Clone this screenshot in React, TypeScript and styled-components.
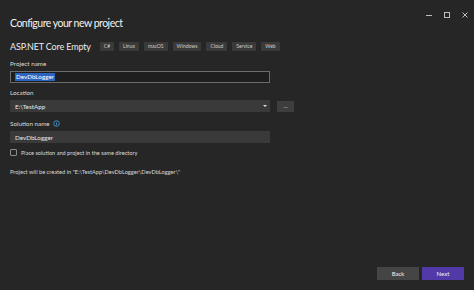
import React from 'react';
import styled, { createGlobalStyle } from 'styled-components';

const GlobalStyle = createGlobalStyle`
  html, body {
    margin: 0;
    padding: 0;
    background: #262626;
  }
  body {
    font-family: Lato, 'Open Sans', 'Liberation Sans', sans-serif;
    color: #e6e6e6;
  }
`;

const Window = styled.div`
  width: 474px;
  height: 290px;
  display: flex;
  flex-direction: column;
  background: #262626;
  box-sizing: border-box;
  overflow: hidden;
`;

const Header = styled.div`
  display: flex;
  justify-content: space-between;
  align-items: flex-start;
`;

const Title = styled.h1`
  margin: 15px 0 0 10px;
  font-size: 10.5px;
  line-height: 16px;
  font-weight: 400;
  letter-spacing: -0.5px;
  color: #f2f2f2;
`;

const Controls = styled.div`
  display: flex;
  align-items: center;
  gap: 12px;
  padding: 12px 6px 0 0;
`;

const ControlButton = styled.span`
  width: 6px;
  height: 6px;
  display: flex;
  align-items: center;
  justify-content: center;
`;

const Subtitle = styled.div`
  display: flex;
  align-items: center;
  gap: 5px;
  margin: 9px 0 0 10px;
  height: 12px;
`;

const Template = styled.span`
  font-size: 9px;
  letter-spacing: -0.15px;
  color: #ececec;
  margin-right: 4px;
`;

const Tag = styled.span`
  height: 9px;
  padding: 0 4px;
  display: flex;
  align-items: center;
  background: #3a3a3a;
  color: #cfcfcf;
  font-size: 5px;
  border-radius: 1px;
`;

const Form = styled.div`
  display: flex;
  flex-direction: column;
  padding: 0 10px;
  margin-top: 7px;
`;

const Label = styled.div<{ $top: number }>`
  display: flex;
  align-items: center;
  gap: 3px;
  height: 8px;
  margin-top: ${(p) => p.$top}px;
  margin-bottom: 4px;
  font-size: 6.3px;
  color: #dcdcdc;
`;

const FieldRow = styled.div`
  display: flex;
  align-items: center;
  gap: 7px;
`;

const Field = styled.div<{ $variant: 'focus' | 'filled' }>`
  width: 260px;
  height: 12px;
  box-sizing: border-box;
  display: flex;
  align-items: center;
  justify-content: space-between;
  padding: 0 4px;
  font-size: 6.3px;
  color: #e6e6e6;
  background: ${(p) => (p.$variant === 'focus' ? '#1e1e1e' : '#3a3a3a')};
  border: 1px solid ${(p) => (p.$variant === 'focus' ? '#6b6b6b' : '#3a3a3a')};
`;

const Selected = styled.span`
  background: #2b63c0;
  color: #ffffff;
  padding: 0 1px;
  line-height: 8px;
`;

const Arrow = styled.span`
  width: 0;
  height: 0;
  border-left: 2px solid transparent;
  border-right: 2px solid transparent;
  border-top: 2px solid #e0e0e0;
  margin-right: -2px;
`;

const BrowseButton = styled.div`
  width: 17px;
  height: 11px;
  display: flex;
  align-items: center;
  justify-content: center;
  background: #3e3e3e;
  color: #cfcfcf;
  font-size: 6px;
  line-height: 6px;
`;

const CheckRow = styled.label`
  display: flex;
  align-items: center;
  gap: 4px;
  margin-top: 5px;
  height: 8px;
  font-size: 5.6px;
  color: #dcdcdc;
`;

const Box = styled.span`
  width: 7px;
  height: 7px;
  box-sizing: border-box;
  border: 1px solid #8a8a8a;
  border-radius: 1px;
`;

const Note = styled.div`
  margin-top: 12px;
  font-size: 5.7px;
  line-height: 8px;
  color: #d6d6d6;
`;

const Footer = styled.div`
  margin-top: auto;
  display: flex;
  justify-content: flex-end;
  gap: 3px;
  padding: 0 10px 10px 0;
`;

const Button = styled.button<{ $primary?: boolean }>`
  width: 42px;
  height: 13px;
  border: none;
  padding: 0;
  font-family: inherit;
  font-size: 6px;
  color: #f0f0f0;
  background: ${(p) => (p.$primary ? '#5239a8' : '#454545')};
`;

const tags = ['C#', 'Linux', 'macOS', 'Windows', 'Cloud', 'Service', 'Web'];

const InfoIcon = () => (
  <svg width="7" height="7" viewBox="0 0 14 14">
    <circle cx="7" cy="7" r="5.6" fill="none" stroke="#4aa3e0" strokeWidth="1.6" />
    <rect x="6.2" y="6" width="1.6" height="4.2" fill="#4aa3e0" />
    <circle cx="7" cy="4.2" r="0.95" fill="#4aa3e0" />
  </svg>
);

const App = () => {
  return (
    <Window>
      <GlobalStyle />
      <Header>
        <Title>Configure your new project</Title>
        <Controls>
          <ControlButton>
            <svg width="6" height="6" viewBox="0 0 6 6">
              <line x1="0" y1="3.5" x2="6" y2="3.5" stroke="#bdbdbd" strokeWidth="1" />
            </svg>
          </ControlButton>
          <ControlButton>
            <svg width="6" height="6" viewBox="0 0 6 6">
              <rect x="0.5" y="0.5" width="5" height="5" fill="none" stroke="#bdbdbd" strokeWidth="1" />
            </svg>
          </ControlButton>
          <ControlButton>
            <svg width="6" height="6" viewBox="0 0 6 6">
              <path d="M0.5 0.5 L5.5 5.5 M5.5 0.5 L0.5 5.5" stroke="#bdbdbd" strokeWidth="1" />
            </svg>
          </ControlButton>
        </Controls>
      </Header>

      <Subtitle>
        <Template>ASP.NET Core Empty</Template>
        {tags.map((t) => (
          <Tag key={t}>{t}</Tag>
        ))}
      </Subtitle>

      <Form>
        <Label $top={0}>Project name</Label>
        <Field $variant="focus">
          <Selected>DevDbLogger</Selected>
        </Field>

        <Label $top={5}>Location</Label>
        <FieldRow>
          <Field $variant="filled">
            <span>E:\TestApp</span>
            <Arrow />
          </Field>
          <BrowseButton>...</BrowseButton>
        </FieldRow>

        <Label $top={7}>
          Solution name <InfoIcon />
        </Label>
        <Field $variant="filled">
          <span>DevDbLogger</span>
        </Field>

        <CheckRow>
          <Box />
          Place solution and project in the same directory
        </CheckRow>

        <Note>Project will be created in "E:\TestApp\DevDbLogger\DevDbLogger\"</Note>
      </Form>

      <Footer>
        <Button>Back</Button>
        <Button $primary>Next</Button>
      </Footer>
    </Window>
  );
};

export default App;
